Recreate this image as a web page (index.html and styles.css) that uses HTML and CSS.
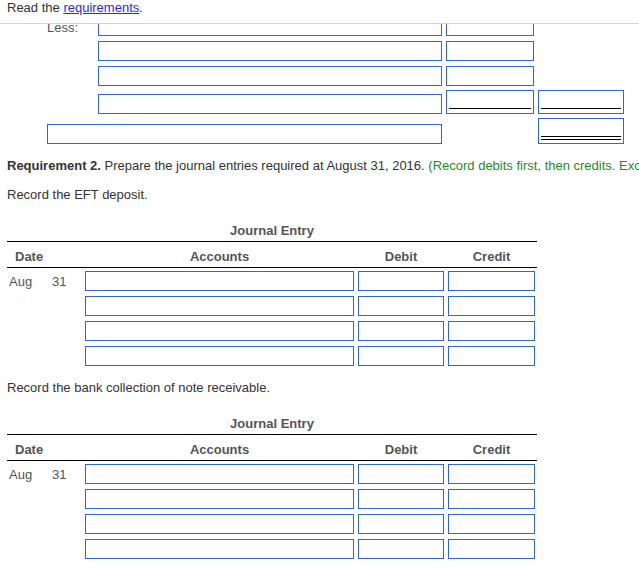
FILE: index.html
```html
<!DOCTYPE html>
<html>
<head>
<meta charset="utf-8">
<link rel="stylesheet" href="styles.css">
</head>
<body>
<div class="header">Read the <a href="#" class="link">requirements</a>.</div>
<div class="viewport">
  <div class="inner">
    <div class="trow r1">
      <span class="lbl">Less:</span>
      <div class="box"></div>
      <div class="box"></div>
    </div>
    <div class="trow r2">
      <span></span>
      <div class="box"></div>
      <div class="box"></div>
    </div>
    <div class="trow r3">
      <span></span>
      <div class="box"></div>
      <div class="box"></div>
    </div>
    <div class="trow r4">
      <span></span>
      <div class="box"></div>
      <div class="box tall"><div class="uline"></div></div>
      <div class="box tall"><div class="uline"></div></div>
    </div>
    <div class="trow r5">
      <div class="box wide"></div>
      <span></span>
      <div class="box taller"><div class="dline"></div></div>
    </div>
  </div>

  <p class="req"><b>Requirement 2.</b> Prepare the journal entries required at August 31, 2016. <span class="green">(Record debits first, then credits. Exclude explanations from any journal entries.)</span></p>

  <p class="para">Record the EFT deposit.</p>
  <div class="journal">
    <div class="caption">Journal Entry</div>
    <div class="jtable">
      <div class="jhead">
        <div class="hdate">Date</div>
        <div class="hc">Accounts</div>
        <div class="hc">Debit</div>
        <div class="hc">Credit</div>
      </div>
      <div class="jrow first">
        <div class="dcell"><span class="mon">Aug</span><span>31</span></div>
        <div class="box"></div><div class="box"></div><div class="box"></div>
      </div>
      <div class="jrow">
        <div class="dcell"></div>
        <div class="box"></div><div class="box"></div><div class="box"></div>
      </div>
      <div class="jrow">
        <div class="dcell"></div>
        <div class="box"></div><div class="box"></div><div class="box"></div>
      </div>
      <div class="jrow">
        <div class="dcell"></div>
        <div class="box"></div><div class="box"></div><div class="box"></div>
      </div>
    </div>
  </div>

  <p class="para">Record the bank collection of note receivable.</p>
  <div class="journal">
    <div class="caption">Journal Entry</div>
    <div class="jtable">
      <div class="jhead">
        <div class="hdate">Date</div>
        <div class="hc">Accounts</div>
        <div class="hc">Debit</div>
        <div class="hc">Credit</div>
      </div>
      <div class="jrow first">
        <div class="dcell"><span class="mon">Aug</span><span>31</span></div>
        <div class="box"></div><div class="box"></div><div class="box"></div>
      </div>
      <div class="jrow">
        <div class="dcell"></div>
        <div class="box"></div><div class="box"></div><div class="box"></div>
      </div>
      <div class="jrow">
        <div class="dcell"></div>
        <div class="box"></div><div class="box"></div><div class="box"></div>
      </div>
      <div class="jrow">
        <div class="dcell"></div>
        <div class="box"></div><div class="box"></div><div class="box"></div>
      </div>
    </div>
  </div>
</div>
</body>
</html>
```

FILE: styles.css
```css
html, body {
  margin: 0;
  padding: 0;
  overflow: hidden;
  background: #fff;
}
body {
  font-family: "Liberation Sans", Arial, sans-serif;
  font-size: 13px;
  line-height: 16px;
  color: #333;
  width: 639px;
  height: 570px;
}
.header {
  height: 23px;
  line-height: 15px;
  padding-left: 7px;
  border-bottom: 1px solid #d2d2d2;
  white-space: nowrap;
}
.link {
  color: #2a2ae6;
  text-decoration: underline;
}
.viewport {
  height: 546px;
  overflow: hidden;
}
.inner {
  margin-top: -8px;
}
.trow {
  display: grid;
  grid-template-columns: 47px 344px 88px 86px;
  column-gap: 4px;
  padding-left: 47px;
  align-items: end;
}
.r2, .r3 { margin-top: 5px; }
.r4, .r5 { margin-top: 4px; }
.lbl {
  color: #555;
  line-height: 16px;
}
.box {
  box-sizing: border-box;
  height: 20px;
  border: 1px solid #3366cc;
  background: #fff;
}
.box.tall {
  height: 24px;
  padding: 0 2px 4px;
  display: flex;
  flex-direction: column;
  justify-content: flex-end;
}
.box.taller {
  height: 26px;
  padding: 0 2px 3px;
  display: flex;
  flex-direction: column;
  justify-content: flex-end;
}
.box.wide {
  grid-column: 1 / 3;
}
.uline {
  height: 1px;
  background: #000;
}
.dline {
  height: 2px;
  border-top: 1px solid #000;
  border-bottom: 1px solid #000;
}
.req {
  margin: 14px 0 0;
  padding-left: 7px;
  white-space: nowrap;
}
.green {
  color: #1f8a1f;
}
.para {
  margin: 13px 0 0;
  padding-left: 7px;
  white-space: nowrap;
}
.journal {
  width: 530px;
  margin-left: 7px;
}
.caption {
  margin-top: 20px;
  margin-bottom: 2px;
  text-align: center;
  font-weight: bold;
  color: #555;
}
.jtable {
  border-top: 1px solid #000;
}
.jhead, .jrow {
  display: grid;
  grid-template-columns: 74px 269px 86px 87px;
  column-gap: 4px;
  padding-right: 2px;
}
.jhead {
  padding-top: 7px;
  padding-bottom: 2px;
  border-bottom: 1px solid #000;
  font-weight: bold;
  color: #555;
}
.hdate {
  padding-left: 8px;
}
.hc {
  text-align: center;
}
.jrow {
  margin-top: 5px;
  align-items: center;
}
.jrow.first {
  margin-top: 3px;
}
.dcell {
  padding-left: 2px;
  padding-top: 2px;
  color: #555;
  white-space: nowrap;
}
.mon {
  display: inline-block;
  width: 43px;
}
.journal + .para {
  margin-top: 14px;
}
```
